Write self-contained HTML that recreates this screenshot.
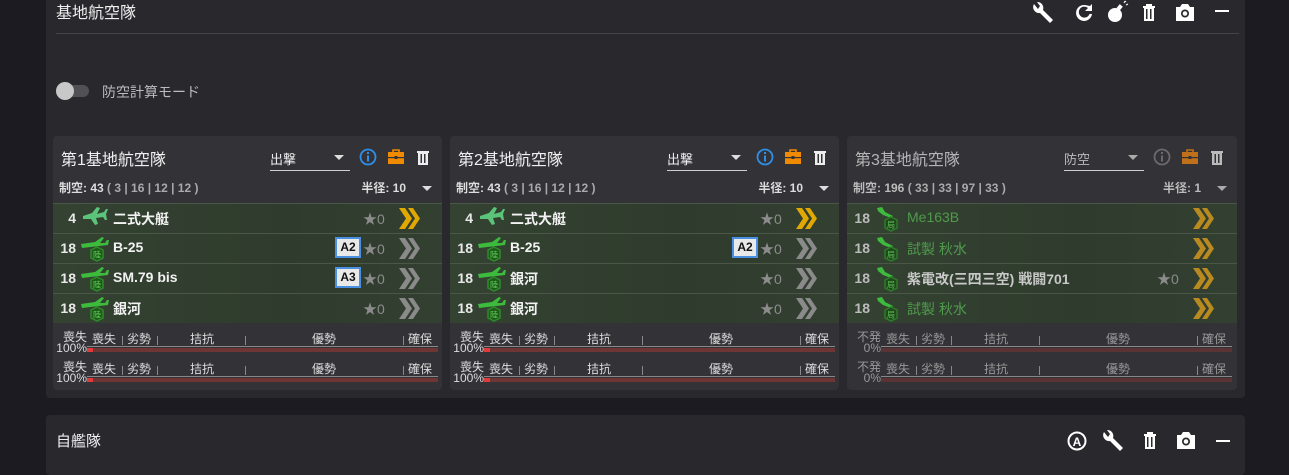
<!DOCTYPE html>
<html><head><meta charset="utf-8">
<style>
*{box-sizing:border-box;margin:0;padding:0}
body{width:1289px;height:463px;background:#1c1b21;font-family:"Liberation Sans","Noto Sans CJK JP",sans-serif;color:#e8e8e8;position:relative;overflow:hidden}
.panel{position:absolute;left:46px;width:1199px;background:#29282d;border-radius:4px}
.ptitle{position:absolute;left:10px;font-size:16px;color:#eee}
.card{position:absolute;top:136px;width:389px;height:254px;background:#333237;border-radius:4px;overflow:hidden}
.ab{position:absolute}
.ctitle{left:8px;top:10px;font-size:16px;color:#f0f0f0}
.sel{left:217px;top:12px;width:80px;height:23px;border-bottom:1px solid #cfcfcf;font-size:13px;color:#f0f0f0}
.sel span{position:absolute;left:0;top:1px}
.sel i{position:absolute;right:6px;top:7px;width:0;height:0;border-left:5px solid transparent;border-right:5px solid transparent;border-top:5px solid #ddd}
.stat{left:6px;top:43px;font-size:12px;font-weight:bold;color:#ddd}
.stat b{color:#aaa}
.rad{right:36px;top:43px;font-size:12px;font-weight:bold;color:#ddd}
.radar{right:10px;top:50px;width:0;height:0;border-left:5px solid transparent;border-right:5px solid transparent;border-top:5px solid #ddd}
.row{position:absolute;left:0;width:389px;height:30px;background:linear-gradient(90deg,#344232,#2f3c2d 60%,#334031);border-top:1px solid #4a5646}
.row .n{position:absolute;right:366px;top:6px;font-size:14px;font-weight:bold;color:#e8e8e8}
.row .nm{position:absolute;left:60px;top:5px;font-size:14px;color:#f2f2f2;font-weight:bold}
.row .nm.g{color:#4f9a4c;font-weight:normal}
.row .st{position:absolute;left:310px;top:5px;font-size:14px;color:#8c8c8c}
.row .bx{position:absolute;left:282px;top:3px;width:26px;height:21px;background:#e9e9ea;border:2px solid #4a90e2;color:#111;font-size:12px;font-weight:bold;text-align:center;line-height:17px}
.row svg.c{position:absolute;left:346px;top:4px}
.row svg.p{position:absolute;left:28px;top:2px}
.bar{position:absolute;left:0;width:389px;height:30px}
.bar .lb{position:absolute;left:3px;top:0;font-size:12px;color:#ddd;line-height:11px;text-align:right;width:31px}
.bar .t{position:absolute;top:-2px;font-size:12px;color:#ddd}
.bar .d{position:absolute;top:4px;width:1px;height:9px;background:#888}
.bar .ln{position:absolute;left:34px;top:14px;width:351px;height:1px;background:#888}
.bar .rd{position:absolute;left:34px;top:16px;width:351px;height:4px;background:#6e3535}
.bar .rr{position:absolute;left:34px;top:16px;width:6px;height:4px;background:#e03a3a}
.dim .t,.dim .lb{color:#999}.dim .rd{background:#5a3434}
</style></head><body>

<div class="panel" style="top:-4px;height:402px">
  <div class="ptitle" style="top:3px">基地航空隊</div>
  <div class="ab" style="left:10px;top:37px;width:1183px;height:1px;background:#444349"></div>
  <div class="ab" style="left:11px;top:89px;width:32px;height:12px;border-radius:6px;background:#505055"></div>
  <div class="ab" style="left:10px;top:86px;width:18px;height:18px;border-radius:50%;background:#c8c8c8"></div>
  <div class="ab" style="left:56px;top:86px;font-size:14px;color:#bbb">防空計算モード</div>
</div>
<svg class="ab" style="left:1030px;top:0" width="200" height="26" viewBox="0 0 200 26">
  <g fill="#fff">
    <path d="M4 4 a6 6 0 0 0 6 9 l10 10 l3 -3 l-10 -10 a6 6 0 0 0 -6 -8 l3 4 l-2 3 z"/>
    <path d="M55 5 a8 8 0 1 0 7 9 h-2.5 a5.5 5.5 0 1 1 -1.5 -6 l-3 3 h7 v-7 l-2 2 z" />
    <circle cx="85" cy="15" r="7"/><rect x="88" y="5" width="4" height="5" transform="rotate(40 90 7)"/>
    <path d="M94 3 l1 -2 M96 5 l2 -1 M95 2 l1 -1" stroke="#fff" stroke-width="1"/>
    <path d="M113 6 h12 v2 h-1 v13 h-10 v-13 h-1 z M116 4 h6 v2 h-6 z"/>
    <rect x="116" y="9" width="1.5" height="10" fill="#29282d"/><rect x="120" y="9" width="1.5" height="10" fill="#29282d"/>
    <path d="M146 7 h4 l2 -3 h6 l2 3 h4 v14 h-18 z"/>
    <circle cx="155" cy="13.5" r="4" fill="#29282d"/><circle cx="155" cy="13.5" r="2.3"/>
    <rect x="185" y="10" width="14" height="2"/>
  </g>
</svg>

<div class="panel" style="top:415px;height:60px">
  <div class="ptitle" style="top:15px;font-size:15px">自艦隊</div>
</div>
<svg class="ab" style="left:1066px;top:428px" width="170" height="26" viewBox="0 0 170 26">
  <g fill="#fff">
    <circle cx="11" cy="13" r="8.5" fill="none" stroke="#fff" stroke-width="2"/>
    <text x="11" y="18" font-size="12" font-weight="bold" text-anchor="middle" font-family="Liberation Sans">A</text>
    <path d="M38 4 a6 6 0 0 0 6 9 l10 10 l3 -3 l-10 -10 a6 6 0 0 0 -6 -8 l3 4 l-2 3 z"/>
    <path d="M78 6 h12 v2 h-1 v13 h-10 v-13 h-1 z M81 4 h6 v2 h-6 z"/>
    <rect x="81" y="9" width="1.5" height="10" fill="#29282d"/><rect x="85" y="9" width="1.5" height="10" fill="#29282d"/>
    <path d="M111 7 h4 l2 -3 h6 l2 3 h4 v14 h-18 z"/>
    <circle cx="120" cy="13.5" r="4" fill="#29282d"/><circle cx="120" cy="13.5" r="2.3"/>
    <rect x="150" y="12" width="14" height="2"/>
  </g>
</svg>

<svg width="0" height="0" style="position:absolute">
 <defs>
  <g id="chev"><path d="M0 0 h6 l7 10.5 l-7 10.5 h-6 l7 -10.5 z M9 0 h5 l7 10.5 l-7 10.5 h-5 l7 -10.5 z"/></g>
  <g id="plane"><path d="M2 10 l9 -3 l5 -6 l3 1 l-3 6 l7 -2 l2 -3 h2 l-2 5 l1 6 h-2 l-2 -3 l-7 1 l2 6 l-3 1 l-4 -6 l-8 0 z" fill="#5bc47a"/></g>
  <g id="lb"><path d="M0 8 l14 -2 l7 -5 l2 1 l-4 5 l5 0 l2 -3 h2 l-1 5 l-26 3 z" fill="#3dbb3d"/><polygon points="16,11 22,14 22,22 16,25 10,22 10,14" fill="#1f5a1a" stroke="#2f8a2a" stroke-width="1.5"/><text x="16" y="21.5" font-size="8" fill="#5fd05a" text-anchor="middle" font-family="Noto Sans CJK JP">陸</text></g>
  <g id="kyoku"><path d="M2 2 l5 -1 l3 5 l8 4 l-2 2 l-8 -3 l-5 -4 z" fill="#3dbb3d"/><polygon points="16,11 22,14 22,22 16,25 10,22 10,14" fill="#1f4a1a" stroke="#2f7a2a" stroke-width="1.5"/><text x="16" y="21.5" font-size="8" fill="#5fc05a" text-anchor="middle" font-family="Noto Sans CJK JP">局</text></g>
 </defs>
</svg>

<div class="card" style="left:53px">
  <div class="ab ctitle">第1基地航空隊</div>
  <div class="ab sel"><span>出撃</span><i></i></div>
  <svg class="ab" style="left:305px;top:11px" width="80" height="20" viewBox="0 0 80 20">
    <circle cx="10" cy="10" r="7.5" fill="none" stroke="#2f8fe6" stroke-width="1.8"/><rect x="9" y="8.5" width="2" height="6" fill="#2f8fe6"/><rect x="9" y="5" width="2" height="2" fill="#2f8fe6"/>
    <path d="M30 5 h16 v12 h-16 z" fill="#f08a00"/><path d="M35 5 v-2 h6 v2" fill="none" stroke="#f08a00" stroke-width="1.6"/><rect x="30" y="10" width="16" height="1.2" fill="#333237"/><rect x="36.5" y="9" width="3" height="3" fill="#333237"/>
    <path d="M59 4 h12 v2 h-1 v12 h-10 v-12 h-1 z" fill="#eee"/><rect x="62.5" y="7" width="1.5" height="9" fill="#333237"/><rect x="66" y="7" width="1.5" height="9" fill="#333237"/>
  </svg>
  <div class="ab stat">制空: 43 <b>( 3 | 16 | 12 | 12 )</b></div>
  <div class="ab rad">半径: 10</div><div class="ab radar"></div>
  <div class="row" style="top:67px"><div class="n">4</div><svg class="p" width="30" height="26"><use href="#plane"/></svg><div class="nm">二式大艇</div><div class="st">★0</div><svg class="c" width="22" height="22" fill="#e0a800"><use href="#chev"/></svg></div>
  <div class="row" style="top:97px"><div class="n">18</div><svg class="p" width="30" height="26"><use href="#lb"/></svg><div class="nm">B-25</div><div class="bx">A2</div><div class="st">★0</div><svg class="c" width="22" height="22" fill="#8a8a8a"><use href="#chev"/></svg></div>
  <div class="row" style="top:127px"><div class="n">18</div><svg class="p" width="30" height="26"><use href="#lb"/></svg><div class="nm">SM.79 bis</div><div class="bx">A3</div><div class="st">★0</div><svg class="c" width="22" height="22" fill="#8a8a8a"><use href="#chev"/></svg></div>
  <div class="row" style="top:157px"><div class="n">18</div><svg class="p" width="30" height="26"><use href="#lb"/></svg><div class="nm">銀河</div><div class="st">★0</div><svg class="c" width="22" height="22" fill="#8a8a8a"><use href="#chev"/></svg></div>
  <div class="bar" style="top:196px"><div class="lb">喪失<br>100%</div><div class="t" style="left:39px">喪失</div><div class="d" style="left:69px"></div><div class="t" style="left:74px">劣勢</div><div class="d" style="left:104px"></div><div class="t" style="left:137px">拮抗</div><div class="d" style="left:192px"></div><div class="t" style="left:259px">優勢</div><div class="d" style="left:350px"></div><div class="t" style="left:355px">確保</div><div class="ln"></div><div class="rd"></div><div class="rr"></div></div>
  <div class="bar" style="top:226px"><div class="lb">喪失<br>100%</div><div class="t" style="left:39px">喪失</div><div class="d" style="left:69px"></div><div class="t" style="left:74px">劣勢</div><div class="d" style="left:104px"></div><div class="t" style="left:137px">拮抗</div><div class="d" style="left:192px"></div><div class="t" style="left:259px">優勢</div><div class="d" style="left:350px"></div><div class="t" style="left:355px">確保</div><div class="ln"></div><div class="rd"></div><div class="rr"></div></div>
</div>

<div class="card" style="left:450px">
  <div class="ab ctitle">第2基地航空隊</div>
  <div class="ab sel"><span>出撃</span><i></i></div>
  <svg class="ab" style="left:305px;top:11px" width="80" height="20" viewBox="0 0 80 20">
    <circle cx="10" cy="10" r="7.5" fill="none" stroke="#2f8fe6" stroke-width="1.8"/><rect x="9" y="8.5" width="2" height="6" fill="#2f8fe6"/><rect x="9" y="5" width="2" height="2" fill="#2f8fe6"/>
    <path d="M30 5 h16 v12 h-16 z" fill="#f08a00"/><path d="M35 5 v-2 h6 v2" fill="none" stroke="#f08a00" stroke-width="1.6"/><rect x="30" y="10" width="16" height="1.2" fill="#333237"/><rect x="36.5" y="9" width="3" height="3" fill="#333237"/>
    <path d="M59 4 h12 v2 h-1 v12 h-10 v-12 h-1 z" fill="#eee"/><rect x="62.5" y="7" width="1.5" height="9" fill="#333237"/><rect x="66" y="7" width="1.5" height="9" fill="#333237"/>
  </svg>
  <div class="ab stat">制空: 43 <b>( 3 | 16 | 12 | 12 )</b></div>
  <div class="ab rad">半径: 10</div><div class="ab radar"></div>
  <div class="row" style="top:67px"><div class="n">4</div><svg class="p" width="30" height="26"><use href="#plane"/></svg><div class="nm">二式大艇</div><div class="st">★0</div><svg class="c" width="22" height="22" fill="#e0a800"><use href="#chev"/></svg></div>
  <div class="row" style="top:97px"><div class="n">18</div><svg class="p" width="30" height="26"><use href="#lb"/></svg><div class="nm">B-25</div><div class="bx">A2</div><div class="st">★0</div><svg class="c" width="22" height="22" fill="#8a8a8a"><use href="#chev"/></svg></div>
  <div class="row" style="top:127px"><div class="n">18</div><svg class="p" width="30" height="26"><use href="#lb"/></svg><div class="nm">銀河</div><div class="st">★0</div><svg class="c" width="22" height="22" fill="#8a8a8a"><use href="#chev"/></svg></div>
  <div class="row" style="top:157px"><div class="n">18</div><svg class="p" width="30" height="26"><use href="#lb"/></svg><div class="nm">銀河</div><div class="st">★0</div><svg class="c" width="22" height="22" fill="#8a8a8a"><use href="#chev"/></svg></div>
  <div class="bar" style="top:196px"><div class="lb">喪失<br>100%</div><div class="t" style="left:39px">喪失</div><div class="d" style="left:69px"></div><div class="t" style="left:74px">劣勢</div><div class="d" style="left:104px"></div><div class="t" style="left:137px">拮抗</div><div class="d" style="left:192px"></div><div class="t" style="left:259px">優勢</div><div class="d" style="left:350px"></div><div class="t" style="left:355px">確保</div><div class="ln"></div><div class="rd"></div><div class="rr"></div></div>
  <div class="bar" style="top:226px"><div class="lb">喪失<br>100%</div><div class="t" style="left:39px">喪失</div><div class="d" style="left:69px"></div><div class="t" style="left:74px">劣勢</div><div class="d" style="left:104px"></div><div class="t" style="left:137px">拮抗</div><div class="d" style="left:192px"></div><div class="t" style="left:259px">優勢</div><div class="d" style="left:350px"></div><div class="t" style="left:355px">確保</div><div class="ln"></div><div class="rd"></div><div class="rr"></div></div>
</div>

<div class="card" style="left:847px;width:390px">
  <div class="ab ctitle" style="color:#b5b5b5">第3基地航空隊</div>
  <div class="ab sel" style="color:#bbb"><span>防空</span><i style="border-top-color:#aaa"></i></div>
  <svg class="ab" style="left:305px;top:11px" width="80" height="20" viewBox="0 0 80 20">
    <circle cx="10" cy="10" r="7.5" fill="none" stroke="#6a6a6a" stroke-width="1.8"/><rect x="9" y="8.5" width="2" height="6" fill="#6a6a6a"/><rect x="9" y="5" width="2" height="2" fill="#6a6a6a"/>
    <path d="M30 5 h16 v12 h-16 z" fill="#c0701a"/><path d="M35 5 v-2 h6 v2" fill="none" stroke="#c0701a" stroke-width="1.6"/><rect x="30" y="10" width="16" height="1.2" fill="#333237"/><rect x="36.5" y="9" width="3" height="3" fill="#333237"/>
    <path d="M59 4 h12 v2 h-1 v12 h-10 v-12 h-1 z" fill="#bbb"/><rect x="62.5" y="7" width="1.5" height="9" fill="#333237"/><rect x="66" y="7" width="1.5" height="9" fill="#333237"/>
  </svg>
  <div class="ab stat" style="color:#bbb">制空: 196 <b>( 33 | 33 | 97 | 33 )</b></div>
  <div class="ab rad" style="color:#bbb">半径: 1</div><div class="ab radar" style="border-top-color:#aaa"></div>
  <div class="row" style="top:67px;width:390px"><div class="n" style="color:#bbb;right:367px">18</div><svg class="p" width="30" height="26"><use href="#kyoku"/></svg><div class="nm g">Me163B</div><svg class="c" width="22" height="22" fill="#b88a20"><use href="#chev"/></svg></div>
  <div class="row" style="top:97px;width:390px"><div class="n" style="color:#bbb;right:367px">18</div><svg class="p" width="30" height="26"><use href="#kyoku"/></svg><div class="nm g">試製 秋水</div><svg class="c" width="22" height="22" fill="#b88a20"><use href="#chev"/></svg></div>
  <div class="row" style="top:127px;width:390px"><div class="n" style="color:#bbb;right:367px">18</div><svg class="p" width="30" height="26"><use href="#kyoku"/></svg><div class="nm" style="color:#c8c8c8">紫電改(三四三空) 戦闘701</div><div class="st">★0</div><svg class="c" width="22" height="22" fill="#b88a20"><use href="#chev"/></svg></div>
  <div class="row" style="top:157px;width:390px"><div class="n" style="color:#bbb;right:367px">18</div><svg class="p" width="30" height="26"><use href="#kyoku"/></svg><div class="nm g">試製 秋水</div><svg class="c" width="22" height="22" fill="#b88a20"><use href="#chev"/></svg></div>
  <div class="bar dim" style="top:196px"><div class="lb">不発<br>0%</div><div class="t" style="left:39px">喪失</div><div class="d" style="left:69px"></div><div class="t" style="left:74px">劣勢</div><div class="d" style="left:104px"></div><div class="t" style="left:137px">拮抗</div><div class="d" style="left:192px"></div><div class="t" style="left:259px">優勢</div><div class="d" style="left:350px"></div><div class="t" style="left:355px">確保</div><div class="ln"></div><div class="rd"></div></div>
  <div class="bar dim" style="top:226px"><div class="lb">不発<br>0%</div><div class="t" style="left:39px">喪失</div><div class="d" style="left:69px"></div><div class="t" style="left:74px">劣勢</div><div class="d" style="left:104px"></div><div class="t" style="left:137px">拮抗</div><div class="d" style="left:192px"></div><div class="t" style="left:259px">優勢</div><div class="d" style="left:350px"></div><div class="t" style="left:355px">確保</div><div class="ln"></div><div class="rd"></div></div>
</div>

</body></html>
